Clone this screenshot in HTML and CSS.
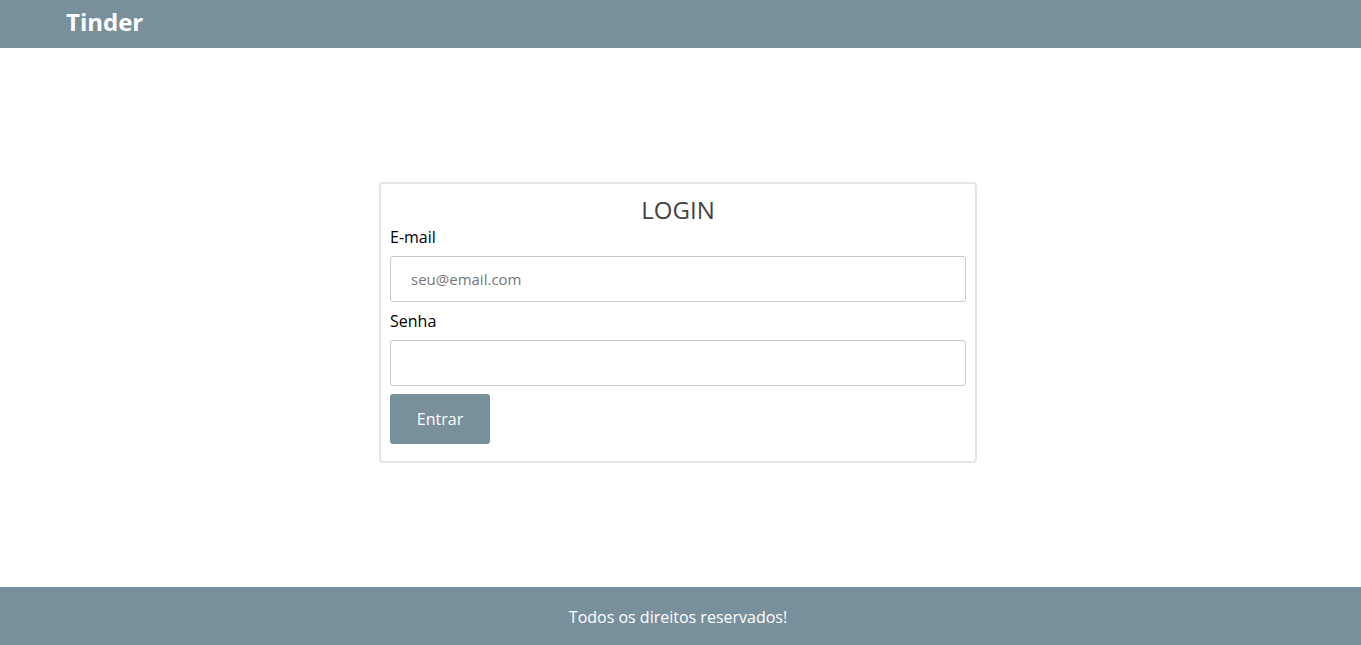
FILE: index.html
```html
<!DOCTYPE html>
<html lang="pt-BR">
<head>
<meta charset="utf-8">
<title>Tinder</title>
<link rel="stylesheet" href="styles.css">
</head>
<body>
<div class="page">
  <header class="topbar">
    <h1 class="brand">Tinder</h1>
  </header>
  <main class="content">
    <form class="card">
      <h2 class="card-title">LOGIN</h2>
      <label class="field-label" for="email">E-mail</label>
      <input class="field-input" id="email" type="email" placeholder="seu@email.com">
      <label class="field-label" for="senha">Senha</label>
      <input class="field-input" id="senha" type="password">
      <button class="btn" type="button">Entrar</button>
    </form>
  </main>
  <footer class="footer">Todos os direitos reservados!</footer>
</div>
</body>
</html>
```
FILE: styles.css
```css
* { box-sizing: border-box; }
html, body { margin: 0; padding: 0; }
body {
  font-family: "Open Sans", "Liberation Sans", sans-serif;
  font-size: 16px;
  color: #000;
  background: #fff;
}
.page {
  display: flex;
  flex-direction: column;
  min-height: 645px;
}
.topbar {
  height: 48px;
  background: #78909c;
  padding: 0 66px;
}
.brand {
  margin: 0;
  font-size: 24px;
  font-weight: 700;
  line-height: 44px;
  color: #fff;
}
.content {
  flex: 1;
  display: flex;
  justify-content: center;
  align-items: flex-start;
  padding: 134px 5px 0 0;
}
.card {
  width: 598px;
  border: 2px solid #e4e4e4;
  border-radius: 4px;
  padding: 12px 9px 17px;
  display: flex;
  flex-direction: column;
  align-items: flex-start;
}
.card-title {
  align-self: stretch;
  margin: 0;
  text-align: center;
  font-size: 24px;
  font-weight: 400;
  line-height: 28px;
  color: #444;
}
.field-label {
  display: block;
  line-height: 24px;
  padding-top: 1px;
}
.field-label + .field-input { margin-top: 7px; }
.field-input + .field-label { margin-top: 6px; }
.field-input {
  width: 100%;
  height: 46px;
  border: 1px solid #c8c8c8;
  border-radius: 3px;
  padding: 0 20px;
  font-family: "Open Sans", "Liberation Sans", sans-serif;
  font-size: 15px;
  color: #333;
  background: #fff;
  outline: none;
}
.field-input::placeholder { color: #777; }
.btn {
  margin-top: 8px;
  width: 100px;
  height: 50px;
  border: 0;
  border-radius: 3px;
  background: #78909c;
  color: #fff;
  font-family: "Open Sans", "Liberation Sans", sans-serif;
  font-size: 16px;
  cursor: pointer;
}
.footer {
  height: 58px;
  background: #78909c;
  color: #fff;
  text-align: center;
  line-height: 56px;
  padding: 2px 5px 0 0;
}
```
